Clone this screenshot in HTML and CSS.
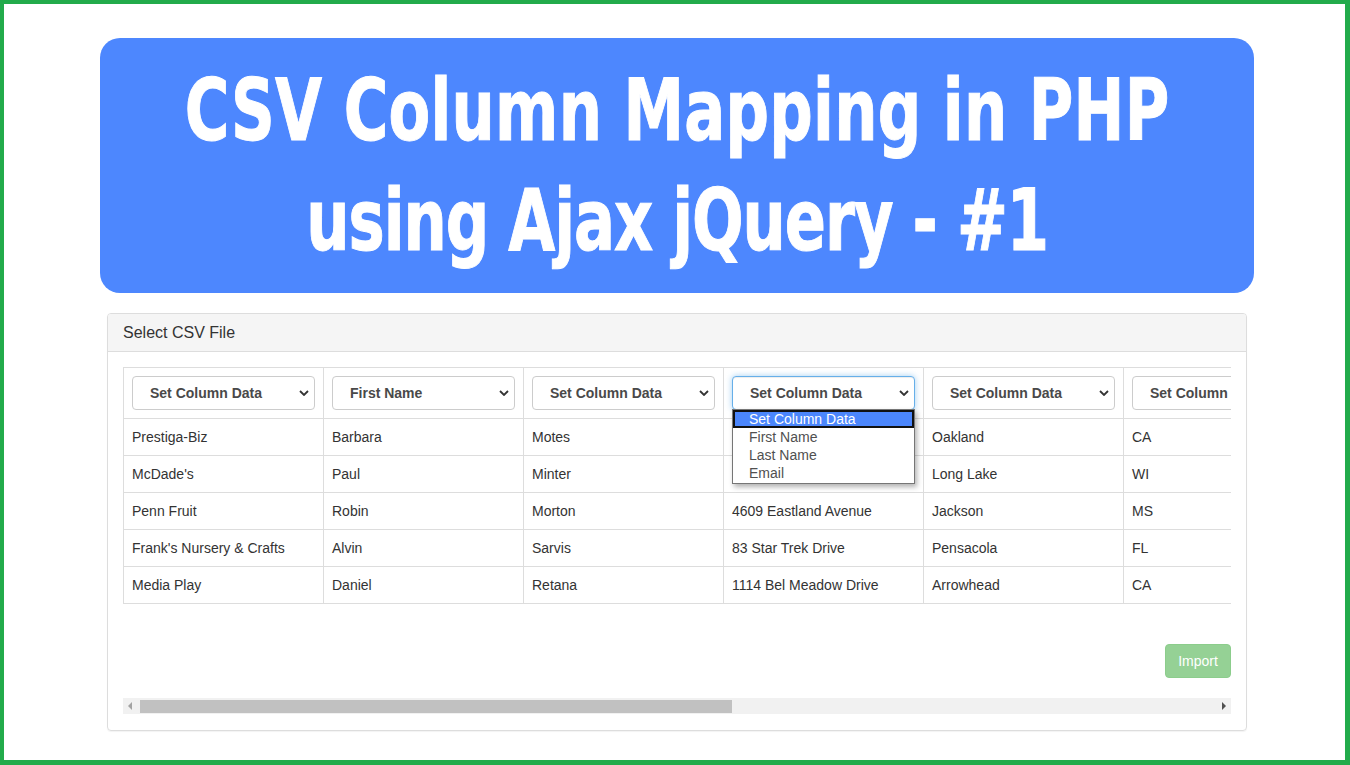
FILE: index.html
```html
<!DOCTYPE html>
<html>
<head>
<meta charset="utf-8">
<link rel="stylesheet" href="styles.css">
</head>
<body>
<div class="frame">
  <div class="banner">
    <h1 class="title"><span class="line one">CSV Column Mapping in PHP</span><span class="line two">using Ajax jQuery - #1</span></h1>
  </div>
  <div class="card">
    <div class="card-head">Select CSV File</div>
    <div class="card-body">
      <div class="scroller">
        <table class="grid">
          <tr class="head-row">
            <th><div class="sel">Set Column Data<svg class="chev" viewBox="0 0 10 6"><path d="M1 1l4 4 4-4"/></svg></div></th>
            <th><div class="sel">First Name<svg class="chev" viewBox="0 0 10 6"><path d="M1 1l4 4 4-4"/></svg></div></th>
            <th><div class="sel">Set Column Data<svg class="chev" viewBox="0 0 10 6"><path d="M1 1l4 4 4-4"/></svg></div></th>
            <th class="open-cell">
              <div class="sel focus">Set Column Data<svg class="chev" viewBox="0 0 10 6"><path d="M1 1l4 4 4-4"/></svg></div>
              <ul class="menu">
                <li class="active">Set Column Data</li>
                <li>First Name</li>
                <li>Last Name</li>
                <li>Email</li>
              </ul>
            </th>
            <th><div class="sel">Set Column Data<svg class="chev" viewBox="0 0 10 6"><path d="M1 1l4 4 4-4"/></svg></div></th>
            <th><div class="sel">Set Column Data<svg class="chev" viewBox="0 0 10 6"><path d="M1 1l4 4 4-4"/></svg></div></th>
            <th><div class="sel">Set Column Data<svg class="chev" viewBox="0 0 10 6"><path d="M1 1l4 4 4-4"/></svg></div></th>
          </tr>
          <tr><td>Prestiga-Biz</td><td>Barbara</td><td>Motes</td><td class="under">2606 Hawks Nest Lane</td><td>Oakland</td><td>CA</td><td>94612</td></tr>
          <tr><td>McDade's</td><td>Paul</td><td>Minter</td><td class="under">3210 Oak Street</td><td>Long Lake</td><td>WI</td><td>54542</td></tr>
          <tr><td>Penn Fruit</td><td>Robin</td><td>Morton</td><td>4609 Eastland Avenue</td><td>Jackson</td><td>MS</td><td>39201</td></tr>
          <tr><td>Frank's Nursery &amp; Crafts</td><td>Alvin</td><td>Sarvis</td><td>83 Star Trek Drive</td><td>Pensacola</td><td>FL</td><td>32501</td></tr>
          <tr><td>Media Play</td><td>Daniel</td><td>Retana</td><td>1114 Bel Meadow Drive</td><td>Arrowhead</td><td>CA</td><td>92352</td></tr>
        </table>
      </div>
      <div class="actions"><button class="btn-import">Import</button></div>
      <div class="hscroll">
        <div class="arrow left"></div>
        <div class="track"><div class="thumb"></div></div>
        <div class="arrow right"></div>
      </div>
    </div>
  </div>
</div>
</body>
</html>
```

FILE: styles.css
```css
* { box-sizing: border-box; }
html, body { margin: 0; padding: 0; background: #fff; }
body { font-family: "Liberation Sans", Arial, sans-serif; }

.frame {
  width: 1350px;
  height: 765px;
  border-style: solid;
  border-color: #22ab4b;
  border-width: 4px 5px 5px 4px;
  overflow: hidden;
  padding-top: 34px;
}

.banner {
  margin-left: 96px;
  width: 1154px;
  height: 255px;
  background: #4d87fe;
  border-radius: 20px;
  display: flex;
  justify-content: center;
  padding-top: 17px;
}

.title {
  margin: 0;
  color: #fff;
  font-family: "DejaVu Sans Condensed", "DejaVu Sans", sans-serif;
  font-stretch: condensed;
  font-weight: bold;
  font-size: 86px;
  line-height: 110px;
  text-align: center;
  display: flex;
  flex-direction: column;
  align-items: center;
  transform: scaleX(0.785);
  white-space: nowrap;
  -webkit-text-stroke: 1px #fff;
}
.title .line { display: block; }
.title .one { letter-spacing: 0.35px; }
.title .two { letter-spacing: -1.3px; }

.card {
  margin-top: 20px;
  margin-left: 103px;
  width: 1140px;
  height: 418px;
  border: 1px solid #ddd;
  border-radius: 4px;
  box-shadow: 0 1px 1px rgba(0,0,0,.05);
}
.card-head {
  height: 38px;
  background: #f5f5f5;
  border-bottom: 1px solid #ddd;
  border-radius: 3px 3px 0 0;
  padding: 9px 15px;
  font-size: 16px;
  line-height: 19px;
  color: #333;
}
.card-body { padding: 15px; }

.scroller {
  width: 1108px;
  overflow: hidden;
  position: relative;
}
.grid {
  border-collapse: collapse;
  table-layout: fixed;
  width: 1400px;
}
.grid th, .grid td {
  width: 200px;
  border: 1px solid #ddd;
  padding: 8px;
  text-align: left;
  vertical-align: top;
  font-size: 14px;
  line-height: 20px;
  color: #333;
  white-space: nowrap;
  overflow: visible;
}
.grid td { height: 37px; }
.grid td.under { visibility: hidden; }
.grid th { font-weight: normal; }

.sel {
  position: relative;
  height: 34px;
  width: 183px;
  border: 1px solid #ccc;
  border-radius: 4px;
  padding: 6px 17px;
  font-weight: bold;
  font-size: 14px;
  line-height: 20px;
  color: #494949;
  background: #fff;
  overflow: hidden;
  white-space: nowrap;
}
.sel .chev {
  position: absolute;
  right: 5px;
  top: 13px;
  width: 10px;
  height: 6px;
  fill: none;
  stroke: #333;
  stroke-width: 1.8;
}
.sel.focus {
  border-color: #66afe9;
  box-shadow: inset 0 1px 1px rgba(0,0,0,.075), 0 0 6px rgba(102,175,233,.6);
}

.open-cell { position: relative; }
.menu {
  position: absolute;
  left: 8px;
  top: 41px;
  width: 183px;
  margin: 0;
  padding: 0 0 2px;
  list-style: none;
  background: #fff;
  border: 1px solid #767676;
  box-shadow: 2px 3px 5px rgba(0,0,0,.3);
  z-index: 5;
}
.menu li {
  height: 17.8px;
  line-height: 18px;
  padding-left: 16px;
  font-size: 14px;
  color: #505050;
}
.menu li.active {
  background: #4b86fc;
  color: #fff;
  outline: 2px solid #111;
  outline-offset: -2px;
  height: 18px;
  line-height: 18px;
}

.actions {
  display: flex;
  justify-content: flex-end;
  margin-top: 40px;
}
.btn-import {
  width: 66px;
  height: 34px;
  border: 1px solid #8ccd8c;
  border-radius: 4px;
  background: #95d195;
  color: #fff;
  font-family: "Liberation Sans", Arial, sans-serif;
  font-size: 14px;
  padding: 0;
}

.hscroll {
  margin-top: 20px;
  height: 16px;
  width: 1108px;
  background: #f1f1f1;
  display: flex;
  align-items: center;
}
.hscroll .arrow {
  width: 17px;
  height: 16px;
  position: relative;
}
.hscroll .arrow::after {
  content: "";
  position: absolute;
  top: 4px;
  border-top: 4px solid transparent;
  border-bottom: 4px solid transparent;
}
.hscroll .arrow.left::after { left: 5px; border-right: 4px solid #a3a3a3; }
.hscroll .arrow.right::after { left: 8px; border-left: 4px solid #505050; }
.hscroll .track { flex: 1; height: 16px; display: flex; align-items: center; }
.hscroll .thumb { width: 592px; height: 13px; background: #c1c1c1; }
```
